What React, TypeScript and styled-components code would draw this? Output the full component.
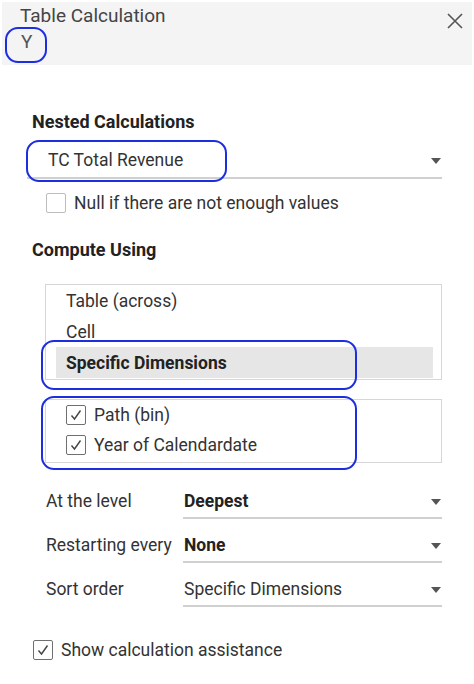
import React from "react";
import styled, { createGlobalStyle } from "styled-components";

const GlobalStyle = createGlobalStyle`
  html, body {
    margin: 0;
    padding: 0;
    background: #ffffff;
  }
  body {
    font-family: Roboto, "Liberation Sans", Arial, sans-serif;
    color: #333333;
  }
`;

const Page = styled.div`
  position: relative;
  width: 474px;
  height: 684px;
  overflow: hidden;
  padding-top: 2px;
  box-sizing: border-box;
`;

const Header = styled.div`
  margin: 0 2px;
  height: 63px;
  background: #f5f4f5;
  padding: 3px 8px 0 18px;
  box-sizing: border-box;
  display: flex;
  justify-content: space-between;
  align-items: flex-start;
`;

const HeaderText = styled.div`
  display: flex;
  flex-direction: column;
`;

const Title = styled.div`
  font-size: 19px;
  line-height: 22px;
  color: #444444;
`;

const Subtitle = styled.div`
  font-size: 19px;
  line-height: 22px;
  color: #555555;
  margin-top: 4px;
  padding-left: 1px;
`;

const CloseButton = styled.button`
  border: none;
  background: none;
  padding: 0;
  margin-top: 7px;
  width: 18px;
  height: 18px;
  display: flex;
  cursor: pointer;
`;

const Body = styled.div`
  padding: 0 32px 0 0;
  display: flex;
  flex-direction: column;
`;

const SectionTitle = styled.div<{ $top: number }>`
  margin-top: ${(p) => p.$top}px;
  margin-left: 32px;
  font-size: 18px;
  line-height: 20px;
  font-weight: 700;
  color: #222222;
`;

const Select = styled.div<{ $left: number; $top?: number; $pad: number; $height?: number; $bold?: boolean }>`
  margin-left: ${(p) => p.$left}px;
  margin-top: ${(p) => p.$top ?? 0}px;
  height: ${(p) => p.$height ?? 32}px;
  padding-left: ${(p) => p.$pad}px;
  padding-right: 1px;
  border-bottom: 2px solid #d0d0d0;
  display: flex;
  align-items: center;
  justify-content: space-between;
  font-size: 17.5px;
  font-weight: ${(p) => (p.$bold ? 700 : 400)};
  color: ${(p) => (p.$bold ? "#222222" : "#333333")};
  flex: 1 0 auto;
`;

const Caret = styled.span`
  width: 0;
  height: 0;
  border-left: 5px solid transparent;
  border-right: 5px solid transparent;
  border-top: 6px solid #555555;
  margin-top: 1px;
`;

const CheckRow = styled.label<{ $left: number; $top: number; $height?: number }>`
  display: flex;
  align-items: center;
  gap: 8px;
  margin-left: ${(p) => p.$left}px;
  margin-top: ${(p) => p.$top}px;
  height: ${(p) => p.$height ?? 22}px;
  font-size: 17.5px;
  color: #333333;
`;

const Box = styled.span<{ $checked: boolean }>`
  width: 18px;
  height: 18px;
  border: 1.5px solid ${(p) => (p.$checked ? "#6f6f6f" : "#bdbdbd")};
  border-radius: 2px;
  background: #ffffff;
  display: flex;
  align-items: center;
  justify-content: center;
  flex-shrink: 0;
`;

const ListBox = styled.div<{ $top: number; $height: number }>`
  margin-top: ${(p) => p.$top}px;
  margin-left: 45px;
  height: ${(p) => p.$height}px;
  border: 1.5px solid #d6d6d6;
  box-sizing: border-box;
  padding: 0 8px 0 10px;
  display: flex;
  flex-direction: column;
`;

const ListItem = styled.div<{ $selected?: boolean }>`
  height: 31px;
  flex-shrink: 0;
  display: flex;
  align-items: center;
  padding-left: 10px;
  font-size: 17.5px;
  font-weight: ${(p) => (p.$selected ? 700 : 400)};
  color: ${(p) => (p.$selected ? "#222222" : "#333333")};
  background: ${(p) => (p.$selected ? "#e6e6e6" : "transparent")};
`;

const FieldRow = styled.div<{ $top: number }>`
  display: flex;
  align-items: flex-start;
  margin-top: ${(p) => p.$top}px;
  padding-left: 46px;
`;

const FieldLabel = styled.div`
  width: 137px;
  height: 32px;
  display: flex;
  align-items: center;
  font-size: 17.5px;
  color: #333333;
  flex-shrink: 0;
  white-space: nowrap;
`;

const Mark = styled.div<{ $x: number; $y: number; $w: number; $h: number }>`
  position: absolute;
  left: ${(p) => p.$x}px;
  top: ${(p) => p.$y}px;
  width: ${(p) => p.$w}px;
  height: ${(p) => p.$h}px;
  border: 2.5px solid #1c2ee0;
  border-radius: 13px;
  box-sizing: border-box;
  pointer-events: none;
`;

const Tick = () => (
  <svg width="14" height="14" viewBox="0 0 14 14">
    <path d="M2.5 7.5 L5.5 11 L11.5 2.5" fill="none" stroke="#444" strokeWidth="1.4" />
  </svg>
);

const Check = ({ checked }: { checked: boolean }) => (
  <Box $checked={checked}>{checked && <Tick />}</Box>
);

const CloseIcon = () => (
  <svg width="18" height="18" viewBox="0 0 18 18">
    <path d="M2 2 L16 16 M16 2 L2 16" stroke="#555" strokeWidth="1.6" />
  </svg>
);

const fields = [
  { label: "At the level", value: "Deepest", bold: true },
  { label: "Restarting every", value: "None", bold: true },
  { label: "Sort order", value: "Specific Dimensions", bold: false },
];

const App: React.FC = () => {
  return (
    <>
      <GlobalStyle />
      <Page>
        <Header>
          <HeaderText>
            <Title>Table Calculation</Title>
            <Subtitle>Y</Subtitle>
          </HeaderText>
          <CloseButton aria-label="Close">
            <CloseIcon />
          </CloseButton>
        </Header>

        <Body>
          <SectionTitle $top={47}>Nested Calculations</SectionTitle>
          <Select $left={27} $top={11} $pad={21} $height={34}>
            <span>TC Total Revenue</span>
            <Caret />
          </Select>
          <CheckRow $left={46} $top={13}>
            <Check checked={false} />
            <span>Null if there are not enough values</span>
          </CheckRow>

          <SectionTitle $top={26}>Compute Using</SectionTitle>
          <ListBox $top={24} $height={96}>
            <ListItem>Table (across)</ListItem>
            <ListItem>Cell</ListItem>
            <ListItem $selected>Specific Dimensions</ListItem>
          </ListBox>
          <ListBox $top={19} $height={64}>
            <CheckRow $left={10} $top={0} $height={30}>
              <Check checked />
              <span>Path (bin)</span>
            </CheckRow>
            <CheckRow $left={10} $top={0} $height={30}>
              <Check checked />
              <span>Year of Calendardate</span>
            </CheckRow>
          </ListBox>

          {fields.map((f, i) => (
            <FieldRow key={f.label} $top={i === 0 ? 22 : 10}>
              <FieldLabel>{f.label}</FieldLabel>
              <Select $left={0} $pad={1} $bold={f.bold}>
                <span>{f.value}</span>
                <Caret />
              </Select>
            </FieldRow>
          ))}

          <CheckRow $left={33} $top={32}>
            <Check checked />
            <span>Show calculation assistance</span>
          </CheckRow>
        </Body>

        <Mark $x={5} $y={27} $w={42} $h={36} />
        <Mark $x={26} $y={140} $w={201} $h={42} />
        <Mark $x={41} $y={340} $w={316} $h={50} />
        <Mark $x={41} $y={396} $w={316} $h={74} />
      </Page>
    </>
  );
};

export default App;
